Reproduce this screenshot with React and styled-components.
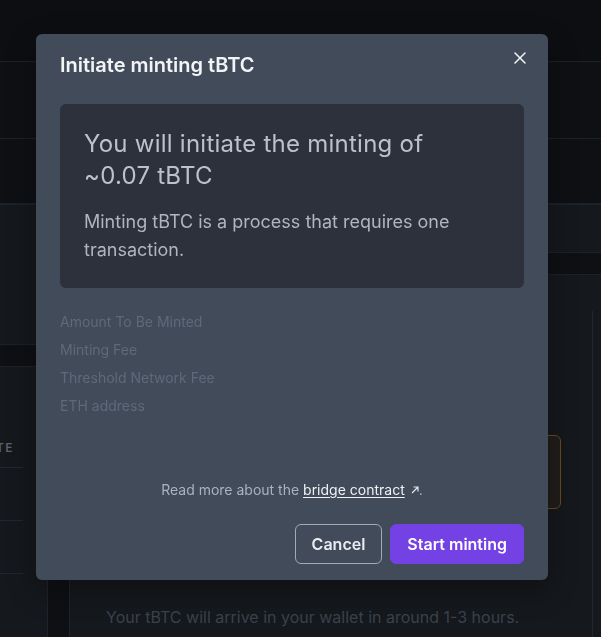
import React from "react";
import styled, { createGlobalStyle } from "styled-components";

const GlobalStyle = createGlobalStyle`
  * { box-sizing: border-box; }
  html, body { margin: 0; padding: 0; }
  body {
    background: #0e1014;
    font-family: Inter, "Noto Sans", sans-serif;
    -webkit-font-smoothing: antialiased;
  }
`;

// ---------- dimmed page behind the modal ----------
const Page = styled.div`
  height: 637px;
  overflow: hidden;
  background: #0e1014;
  display: flex;
  flex-direction: column;
`;

const Bar = styled.div`
  height: ${(p) => p.$h}px;
  flex-shrink: 0;
  background: ${(p) => p.$bg || "#0e1014"};
  border-bottom: 1px solid #1d2128;
`;

const Body = styled.div`
  flex: 1;
  display: flex;
  gap: 21px;
`;

const Column = styled.div`
  display: flex;
  flex-direction: column;
  gap: 21px;
  width: ${(p) => (p.$w ? `${p.$w}px` : "auto")};
  flex: ${(p) => (p.$w ? "none" : 1)};
`;

const Card = styled.div`
  background: #15181c;
  height: ${(p) => (p.$h ? `${p.$h}px` : "auto")};
  flex: ${(p) => (p.$h ? "none" : 1)};
  border-bottom: ${(p) => (p.$h ? "1px solid #1d2128" : "none")};
  border-top: 1px solid #1d2128;
`;

const TableCard = styled(Card)`
  padding: 68px 24px 0 0;
  border-right: 1px solid #1f232a;
`;

const HeadCell = styled.div`
  height: 33px;
  display: flex;
  align-items: center;
  justify-content: flex-end;
  padding: 0 9px 8px 0;
  border-bottom: 1px solid #22262d;
  font-size: 12px;
  font-weight: 600;
  letter-spacing: 0.12em;
  color: #5a626d;
`;

const Row = styled.div`
  height: 53px;
  border-bottom: 1px solid #22262d;
`;

const MainCard = styled(Card)`
  padding: 36px 8px 0 0;
  border-left: 1px solid #1f232a;
`;

const InnerPanel = styled.div`
  height: 100%;
  border-right: 1px solid #22262d;
  display: flex;
  flex-direction: column;
  align-items: flex-end;
`;

const WarningBox = styled.div`
  margin: 124px 31px 0 0;
  width: 240px;
  height: 74px;
  border: 1px solid #6a491c;
  border-radius: 6px;
  background: #201d1a;
`;

const ArriveText = styled.p`
  align-self: flex-start;
  margin: 96px 0 0 36px;
  font-size: 16px;
  line-height: 24px;
  color: #3b424c;
`;

// ---------- modal ----------
const Overlay = styled.div`
  position: fixed;
  inset: 0;
  display: flex;
  justify-content: center;
  align-items: flex-start;
  padding: 34px 17px 0 0;
`;

const Modal = styled.section`
  position: relative;
  width: 512px;
  background: #414b5a;
  border-radius: 6px;
  box-shadow: 0 10px 30px rgba(0, 0, 0, 0.3);
`;

const Title = styled.h2`
  margin: 0;
  padding: 16px 24px 0;
  font-size: 20px;
  line-height: 30px;
  font-weight: 600;
  color: #f3f4f6;
`;

const CloseButton = styled.button`
  position: absolute;
  top: 8px;
  right: 12px;
  width: 32px;
  height: 32px;
  display: flex;
  align-items: center;
  justify-content: center;
  background: transparent;
  border: none;
  border-radius: 6px;
  color: #f3f4f6;
  cursor: pointer;
  padding: 0;
`;

const ModalBody = styled.div`
  padding: 24px 24px 0;
`;

const InfoBox = styled.div`
  background: #2c313b;
  border-radius: 6px;
  padding: 24px;
`;

const InfoHeading = styled.h3`
  margin: 0;
  font-size: 24px;
  line-height: 32px;
  font-weight: 400;
  letter-spacing: 0.25px;
  color: #b9c2ce;
`;

const InfoText = styled.p`
  margin: 16px 0 0;
  font-size: 18px;
  line-height: 28px;
  color: #aeb6c2;
`;

const DetailList = styled.ul`
  list-style: none;
  margin: 24px 0 0;
  padding: 0;
  display: flex;
  flex-direction: column;
  gap: 8px;
`;

const DetailItem = styled.li`
  font-size: 14px;
  line-height: 20px;
  color: #5f6979;
`;

const ReadMore = styled.p`
  margin: 64px 0 0;
  text-align: center;
  font-size: 14px;
  line-height: 20px;
  color: #aab2be;
`;

const Link = styled.a`
  color: #eef0f3;
  text-decoration: underline;
  text-underline-offset: 2px;
  margin-right: 6px;
`;

const Footer = styled.div`
  display: flex;
  justify-content: flex-end;
  gap: 8px;
  padding: 24px 24px 16px;
`;

const Button = styled.button`
  height: 40px;
  padding: 0 16px;
  border-radius: 6px;
  font-family: inherit;
  font-size: 16px;
  font-weight: 600;
  cursor: pointer;
  border: 1px solid ${(p) => (p.$primary ? "#7341e4" : "#a2aab6")};
  background: ${(p) => (p.$primary ? "#7341e4" : "transparent")};
  color: ${(p) => (p.$primary ? "#ffffff" : "#e9ecf0")};
`;

const details = [
  "Amount To Be Minted",
  "Minting Fee",
  "Threshold Network Fee",
  "ETH address",
];

const CloseIcon = () => (
  <svg width="12" height="12" viewBox="0 0 12 12" fill="none">
    <path d="M1 1L11 11M11 1L1 11" stroke="currentColor" strokeWidth="1.5" strokeLinecap="round" />
  </svg>
);

const ExternalIcon = () => (
  <svg width="8" height="8" viewBox="0 0 8 8" fill="none" style={{ verticalAlign: "1px" }}>
    <path d="M1 7L7 1M2.5 1H7V5.5" stroke="#e3e6ea" strokeWidth="1.2" />
  </svg>
);

export default function App() {
  return (
    <>
      <GlobalStyle />
      <Page>
        <Bar $h={62} $bg="#0c0e11" />
        <Bar $h={77} />
        <Bar $h={65} />
        <Body>
          <Column $w={48}>
            <Card $h={141} />
            <TableCard>
              <HeadCell>TE</HeadCell>
              <Row />
              <Row />
            </TableCard>
          </Column>
          <Column>
            <Card $h={49} />
            <MainCard>
              <InnerPanel>
                <WarningBox />
                <ArriveText>Your tBTC will arrive in your wallet in around 1-3 hours.</ArriveText>
              </InnerPanel>
            </MainCard>
          </Column>
        </Body>
      </Page>

      <Overlay>
        <Modal>
          <Title>Initiate minting tBTC</Title>
          <CloseButton aria-label="Close">
            <CloseIcon />
          </CloseButton>
          <ModalBody>
            <InfoBox>
              <InfoHeading>
                You will initiate the minting of
                <br />
                ~0.07 tBTC
              </InfoHeading>
              <InfoText>Minting tBTC is a process that requires one transaction.</InfoText>
            </InfoBox>
            <DetailList>
              {details.map((d) => (
                <DetailItem key={d}>{d}</DetailItem>
              ))}
            </DetailList>
            <ReadMore>
              Read more about the <Link href="#">bridge contract</Link>
              <ExternalIcon />.
            </ReadMore>
          </ModalBody>
          <Footer>
            <Button>Cancel</Button>
            <Button $primary>Start minting</Button>
          </Footer>
        </Modal>
      </Overlay>
    </>
  );
}
